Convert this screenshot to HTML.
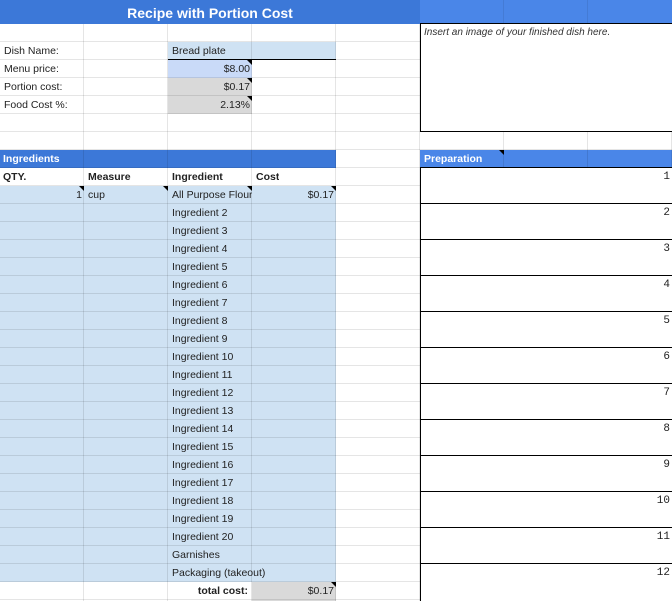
<!DOCTYPE html>
<html><head><meta charset="utf-8"><style>
*{margin:0;padding:0;box-sizing:border-box}
body{width:672px;height:601px;overflow:hidden;background:#fff;font-family:"Liberation Sans",sans-serif;font-size:10.5px;color:#222;position:relative}
.b{position:absolute}
.t{position:absolute;height:18px;line-height:18px;white-space:nowrap;overflow:hidden}
.grid{position:absolute;left:0;top:24px;width:672px;height:577px;
background-image:linear-gradient(to right,rgba(0,0,0,0.1) 1px,transparent 1px),linear-gradient(to bottom,rgba(0,0,0,0.1) 1px,transparent 1px);
background-size:84px 18px;background-position:-1px -1px}
.tri{position:absolute;width:0;height:0;border-top:5px solid #000;border-left:5px solid transparent}
.box{position:absolute;background:#fff;border:1px solid #000}
.w{color:#fff;font-weight:bold}
.r{text-align:right}
.n{position:absolute;left:420px;width:252px;height:36px;border-top:1px solid #000;border-left:1px solid #000;background:#fff;font-family:"Liberation Mono",monospace;font-size:11px;text-align:right;padding:3px 2px 0 0}
</style></head><body>
<div class="b" style="left:0;top:0;width:672px;height:24px;background:#3c78d8"></div>
<div class="b" style="left:420px;top:0;width:252px;height:24px;background:#4a86e8"></div>
<div class="b" style="left:503px;top:0;width:1px;height:24px;background:rgba(0,0,0,0.08)"></div>
<div class="b" style="left:587px;top:0;width:1px;height:24px;background:rgba(0,0,0,0.08)"></div>
<div class="b" style="left:168px;top:42px;width:168px;height:18px;background:#cfe2f3"></div>
<div class="b" style="left:168px;top:60px;width:84px;height:18px;background:#c9daf8"></div>
<div class="b" style="left:168px;top:78px;width:84px;height:36px;background:#d9d9d9"></div>
<div class="b" style="left:0;top:150px;width:336px;height:18px;background:#3c78d8"></div>
<div class="b" style="left:420px;top:150px;width:252px;height:18px;background:#4a86e8"></div>
<div class="b" style="left:0;top:186px;width:336px;height:396px;background:#cfe2f3"></div>
<div class="b" style="left:252px;top:582px;width:84px;height:19px;background:#d9d9d9"></div>
<div class="grid"></div>
<div class="b" style="left:168px;top:59px;width:168px;height:1px;background:#000"></div>
<div class="box" style="left:420px;top:23px;width:253px;height:109px"></div>
<div class="n" style="top:167px">1</div>
<div class="n" style="top:203px">2</div>
<div class="n" style="top:239px">3</div>
<div class="n" style="top:275px">4</div>
<div class="n" style="top:311px">5</div>
<div class="n" style="top:347px">6</div>
<div class="n" style="top:383px">7</div>
<div class="n" style="top:419px">8</div>
<div class="n" style="top:455px">9</div>
<div class="n" style="top:491px">10</div>
<div class="n" style="top:527px">11</div>
<div class="n" style="top:563px;height:38px">12</div>

<div class="t w" style="left:0;top:2px;width:420px;height:22px;line-height:22px;text-align:center;font-size:14px">Recipe with Portion Cost</div>
<div class="t" style="left:424px;top:24px;font-style:italic;font-size:10px;color:#333">Insert an image of your finished dish here.</div>
<div class="t" style="left:4px;top:42px">Dish Name:</div>
<div class="t" style="left:4px;top:60px">Menu price:</div>
<div class="t" style="left:4px;top:78px">Portion cost:</div>
<div class="t" style="left:4px;top:96px">Food Cost %:</div>
<div class="t" style="left:172px;top:42px">Bread plate</div>
<div class="t r" style="left:168px;top:60px;width:82px">$8.00</div>
<div class="t r" style="left:168px;top:78px;width:82px">$0.17</div>
<div class="t r" style="left:168px;top:96px;width:82px">2.13%</div>
<div class="t w" style="left:3px;top:150px">Ingredients</div>
<div class="t w" style="left:424px;top:150px">Preparation</div>
<div class="t" style="left:3px;top:168px;font-weight:bold">QTY.</div>
<div class="t" style="left:88px;top:168px;font-weight:bold">Measure</div>
<div class="t" style="left:172px;top:168px;font-weight:bold">Ingredient</div>
<div class="t" style="left:256px;top:168px;font-weight:bold">Cost</div>
<div class="t r" style="left:0;top:186px;width:82px">1</div>
<div class="t" style="left:88px;top:186px">cup</div>
<div class="t" style="left:172px;top:186px;width:80px">All Purpose Flour</div>
<div class="t r" style="left:252px;top:186px;width:82px">$0.17</div>
<div class="t" style="left:172px;top:204px">Ingredient 2</div>
<div class="t" style="left:172px;top:222px">Ingredient 3</div>
<div class="t" style="left:172px;top:240px">Ingredient 4</div>
<div class="t" style="left:172px;top:258px">Ingredient 5</div>
<div class="t" style="left:172px;top:276px">Ingredient 6</div>
<div class="t" style="left:172px;top:294px">Ingredient 7</div>
<div class="t" style="left:172px;top:312px">Ingredient 8</div>
<div class="t" style="left:172px;top:330px">Ingredient 9</div>
<div class="t" style="left:172px;top:348px">Ingredient 10</div>
<div class="t" style="left:172px;top:366px">Ingredient 11</div>
<div class="t" style="left:172px;top:384px">Ingredient 12</div>
<div class="t" style="left:172px;top:402px">Ingredient 13</div>
<div class="t" style="left:172px;top:420px">Ingredient 14</div>
<div class="t" style="left:172px;top:438px">Ingredient 15</div>
<div class="t" style="left:172px;top:456px">Ingredient 16</div>
<div class="t" style="left:172px;top:474px">Ingredient 17</div>
<div class="t" style="left:172px;top:492px">Ingredient 18</div>
<div class="t" style="left:172px;top:510px">Ingredient 19</div>
<div class="t" style="left:172px;top:528px">Ingredient 20</div>
<div class="t" style="left:172px;top:546px">Garnishes</div>
<div class="t" style="left:172px;top:564px">Packaging (takeout)</div>
<div class="t r" style="left:168px;top:582px;width:80px;font-weight:bold">total cost:</div>
<div class="t r" style="left:252px;top:582px;width:82px">$0.17</div>

<div class="tri" style="left:247px;top:60px"></div>
<div class="tri" style="left:247px;top:78px"></div>
<div class="tri" style="left:247px;top:96px"></div>
<div class="tri" style="left:79px;top:186px"></div>
<div class="tri" style="left:163px;top:186px"></div>
<div class="tri" style="left:247px;top:186px"></div>
<div class="tri" style="left:331px;top:186px"></div>
<div class="tri" style="left:499px;top:150px"></div>
<div class="tri" style="left:331px;top:582px"></div>
</body></html>
